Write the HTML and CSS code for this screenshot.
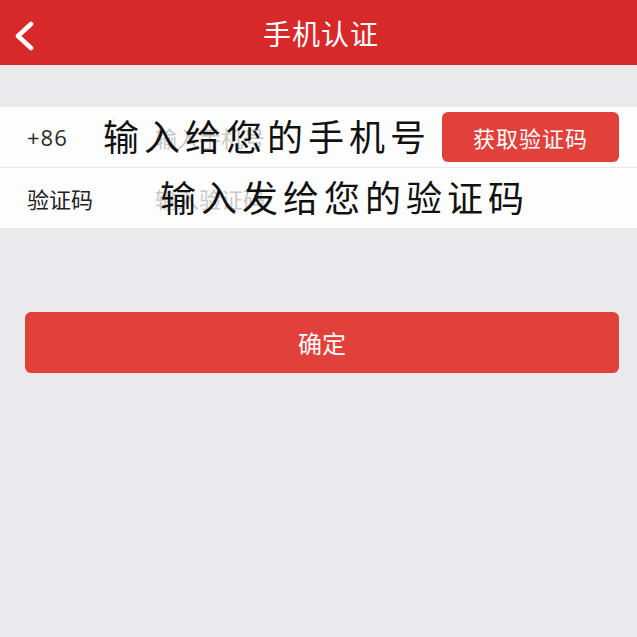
FILE: index.html
```html
<!DOCTYPE html>
<html lang="zh-CN">
<head>
<meta charset="utf-8">
<title>手机认证</title>
<link rel="stylesheet" href="styles.css">
</head>
<body>
<header class="topbar">
  <span class="back">
    <svg width="24" height="30" viewBox="0 0 24 30"><path d="M19 3 L6 15 L19 27" fill="none" stroke="#fff" stroke-width="4.5" stroke-linecap="round" stroke-linejoin="round"/></svg>
  </span>
  <h1 class="title">手机认证</h1>
</header>
<main>
  <section class="form">
    <div class="row row-phone">
      <span class="label num">+86</span>
      <span class="sep"></span>
      <span class="placeholder">输入手机号</span>
      <button class="code-btn">获取验证码</button>
      <span class="note note-phone">输入给您的手机号</span>
    </div>
    <div class="row row-code">
      <span class="label">验证码</span>
      <span class="placeholder">输入验证码</span>
      <span class="note note-code">输入发给您的验证码</span>
    </div>
  </section>
  <button class="confirm">确定</button>
</main>
</body>
</html>
```
FILE: styles.css
```css
* { box-sizing: border-box; }
html, body { margin: 0; padding: 0; }
body {
  background: #eaeaec;
  font-family: "Noto Sans CJK SC", "Noto Sans", sans-serif;
  width: 637px;
  height: 637px;
  overflow: hidden;
}
.topbar {
  height: 65px;
  background: #d8292a;
  display: flex;
  align-items: center;
  justify-content: center;
  position: relative;
}
.back {
  position: absolute;
  left: 12px;
  top: 21px;
  display: flex;
}
.title {
  margin: 0;
  font-size: 28px;
  font-weight: 400;
  color: #fff;
  letter-spacing: 1px;
  margin-left: 5px;
}
.form {
  margin-top: 42px;
  background: #fdfdfd;
}
.row {
  position: relative;
  display: flex;
  align-items: center;
  padding-left: 27px;
}
.row-phone {
  height: 61px;
  border-bottom: 1px solid #e8e8e8;
}
.row-code {
  height: 60px;
}
.label {
  font-size: 22px;
  color: #222;
  width: 86px;
}
.num {
  font-family: "Open Sans", "Noto Sans", sans-serif;
  font-size: 22px;
  letter-spacing: 1px;
  color: #2a2a2a;
}
.sep {
  width: 1px;
  height: 40px;
  background: #e6e6e6;
}
.placeholder {
  font-size: 22px;
  color: #c8c8c8;
  margin-left: 41px;
}
.row-code .placeholder { margin-left: 42px; }
.code-btn {
  margin-left: auto;
  margin-right: 18px;
  width: 177px;
  height: 50px;
  border: 0;
  border-radius: 6px;
  background: #e1403b;
  color: #fff;
  font-family: inherit;
  font-size: 22px;
  letter-spacing: 1px;
}
.note {
  position: absolute;
  top: 50%;
  transform: translateY(-56%);
  font-size: 36px;
  letter-spacing: 5px;
  color: #111;
  line-height: 1;
  white-space: nowrap;
}
.note-phone { left: 103px; }
.note-code { left: 160px; }
.confirm {
  display: block;
  margin: 84px 0 0 25px;
  width: 594px;
  height: 61px;
  border: 0;
  border-radius: 6px;
  background: #e1403b;
  color: #fff;
  font-family: inherit;
  font-size: 24px;
}
```
